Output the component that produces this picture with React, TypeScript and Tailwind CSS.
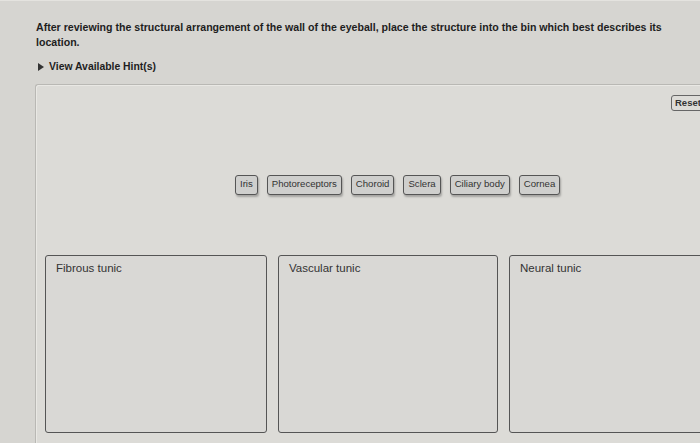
const chips = ['Iris', 'Photoreceptors', 'Choroid', 'Sclera', 'Ciliary body', 'Cornea'];
const bins = [
  { label: 'Fibrous tunic', w: 'w-[222px]' },
  { label: 'Vascular tunic', w: 'w-[220px]' },
  { label: 'Neural tunic', w: 'w-[220px]' },
];

export default function App() {
  return (
    <div className="w-[700px] h-[443px] overflow-hidden bg-[#d6d5d1] text-[#1e1e1e] font-['Liberation_Sans',Arial,sans-serif] border-t border-[#e4e3df]">
      <div className="pt-[19px] pl-[36px] pr-[24px]">
        <p className="text-[10.6px] font-bold leading-[15px]">
          After reviewing the structural arrangement of the wall of the eyeball, place the structure into the bin which best describes its location.
        </p>
        <div className="mt-[9px] flex items-center gap-[5px] pl-[2px] text-[10.4px] font-bold">
          <svg width="6" height="8" viewBox="0 0 6 8">
            <path d="M0 0 L6 4 L0 8 Z" fill="#333" />
          </svg>
          <span>View Available Hint(s)</span>
        </div>
      </div>

      <div className="mt-[9px] ml-[35px] w-[700px] h-[400px] bg-[#dcdbd7] border-t border-l border-[#b9b8b4] rounded-tl-[3px] shadow-[inset_1px_1px_0_#e9e8e4]">
        <div className="flex justify-end pr-[24px] pt-[10px]">
          <button className="h-[16px] w-[40px] border border-[#666] rounded-[3px] bg-[#dddcd8] text-[9.5px] font-bold text-[#333] leading-none text-left pl-[3px]">
            Reset
          </button>
        </div>

        <div className="mt-[64px] pl-[199px] flex gap-[9px]">
          {chips.map((c) => (
            <div
              key={c}
              className="h-[20px] px-[4px] flex items-center border-[1.5px] border-[#555] rounded-[3px] bg-[#cfcfcd] shadow-[1px_2px_2px_rgba(0,0,0,0.25)] text-[9.6px] text-[#333] whitespace-nowrap"
            >
              {c}
            </div>
          ))}
        </div>

        <div className="mt-[60px] pl-[9px] flex gap-[11px]">
          {bins.map((b) => (
            <div
              key={b.label}
              className={`${b.w} h-[178px] border-[1.5px] border-[#555] rounded-[3px] bg-[#d9d8d5] px-[10px] pt-[4px] text-[11.5px] text-[#333]`}
            >
              {b.label}
            </div>
          ))}
        </div>
      </div>
    </div>
  );
}
